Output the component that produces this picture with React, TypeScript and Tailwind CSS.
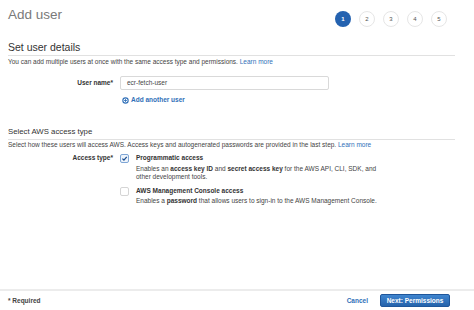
import React from 'react'

const steps = [1, 2, 3, 4, 5]

const StepDot = ({ n, active }: { n: number; active: boolean }) => (
    <div
        className={
            active
                ? 'flex h-4 w-4 items-center justify-center rounded-full bg-[#2462b0] text-[6px] font-bold text-white'
                : 'flex h-4 w-4 items-center justify-center rounded-full border border-[#e6e6e6] bg-white text-[6px] text-[#555]'
        }
    >
        {n}
    </div>
)

const Checkbox = ({ checked }: { checked: boolean }) =>
    checked ? (
        <div className="flex h-[9px] w-[9px] items-center justify-center rounded-[2px] border border-[#7fa6d6] bg-[#eef4fb]">
            <svg viewBox="0 0 10 10" className="h-[7px] w-[7px]">
                <path d="M2 5.2 L4.2 7.4 L8.2 2.6" fill="none" stroke="#1d4f91" strokeWidth="1.8" />
            </svg>
        </div>
    ) : (
        <div className="h-[9px] w-[9px] rounded-[2px] border border-[#d5d5d5] bg-white" />
    )

const App = () => {
    return (
        <div className="flex h-screen w-full flex-col bg-white font-['Liberation_Sans',Arial,sans-serif] text-[#444]">
            <div className="flex-1 pl-2 pr-[19px]">
                {/* header */}
                <div className="flex items-start justify-between">
                    <h1 className="pt-2 text-[13.5px] leading-none text-[#7a7a7a]">Add user</h1>
                    <div className="flex gap-2 pr-2 pt-[11px]">
                        {steps.map((s) => (
                            <StepDot key={s} n={s} active={s === 1} />
                        ))}
                    </div>
                </div>

                {/* user details */}
                <h2 className="mt-[14px] border-b border-[#e1e1e1] pb-[2px] text-[10.5px] leading-[12px] text-[#333]">
                    Set user details
                </h2>
                <p className="mt-[2px] text-[6.5px] leading-[8px]">
                    You can add multiple users at once with the same access type and permissions.{' '}
                    <span className="text-[#2f6fb8]">Learn more</span>
                </p>

                <div className="mt-[10px] flex items-center">
                    <div className="w-[106px] pr-[1px] text-right text-[6.5px] font-bold text-[#333]">User name*</div>
                    <div className="ml-[6px] flex h-[14px] w-[209px] items-center rounded-[2px] border border-[#d9d9d9] px-[6px] text-[6.5px] text-[#444]">
                        ecr-fetch-user
                    </div>
                </div>
                <div className="ml-[114px] mt-[6px] flex items-center gap-[2px] text-[6.5px] font-bold leading-[8px] text-[#2f6fb8]">
                    <svg viewBox="0 0 10 10" className="h-[7px] w-[7px]">
                        <circle cx="5" cy="5" r="3.8" fill="none" stroke="#2f6fb8" strokeWidth="1.6" />
                        <path d="M5 3 V7 M3 5 H7" stroke="#2f6fb8" strokeWidth="1.3" />
                    </svg>
                    <span>Add another user</span>
                </div>

                {/* access type */}
                <h2 className="mt-[23px] border-b border-[#e1e1e1] pb-[2px] text-[7.8px] leading-[10px] text-[#333]">
                    Select AWS access type
                </h2>
                <p className="mt-[1px] text-[6.5px] leading-[8px]">
                    Select how these users will access AWS. Access keys and autogenerated passwords are provided in the last step.{' '}
                    <span className="text-[#2f6fb8]">Learn more</span>
                </p>

                <div className="mt-[5px] flex">
                    <div className="w-[106px] pr-[1px] text-right text-[6.5px] font-bold leading-[8px] text-[#333]">Access type*</div>
                    <div className="ml-[6px] flex flex-col">
                        <div className="flex gap-[7px]">
                            <Checkbox checked />
                            <div className="w-[250px]">
                                <div className="text-[6.5px] font-bold leading-[8px] text-[#333]">Programmatic access</div>
                                <p className="mt-[3px] text-[6.5px] leading-[8px]">
                                    Enables an <b className="text-[#333]">access key ID</b> and{' '}
                                    <b className="text-[#333]">secret access key</b> for the AWS API, CLI, SDK, and{' '}
                                    <br />
                                    other development tools.
                                </p>
                            </div>
                        </div>
                        <div className="mt-[6px] flex gap-[7px]">
                            <Checkbox checked={false} />
                            <div>
                                <div className="text-[6.5px] font-bold leading-[8px] text-[#333]">AWS Management Console access</div>
                                <p className="mt-[2px] text-[6.5px] leading-[8px]">
                                    Enables a <b className="text-[#333]">password</b> that allows users to sign-in to the AWS Management Console.
                                </p>
                            </div>
                        </div>
                    </div>
                </div>
            </div>

            {/* footer */}
            <div className="flex h-[21px] items-center justify-between border-t-2 border-[#ececec] pl-2 pr-6">
                <span className="text-[6.5px] font-bold text-[#444]">* Required</span>
                <div className="flex items-center gap-3">
                    <span className="text-[6.5px] font-bold text-[#2f6fb8]">Cancel</span>
                    <button className="flex h-[13px] w-[70px] items-center justify-center rounded-[2px] border border-[#1f569a] bg-gradient-to-b from-[#3f85cf] to-[#2563ab] text-[6.5px] font-bold text-white">
                        Next: Permissions
                    </button>
                </div>
            </div>
        </div>
    )
}

export default App
